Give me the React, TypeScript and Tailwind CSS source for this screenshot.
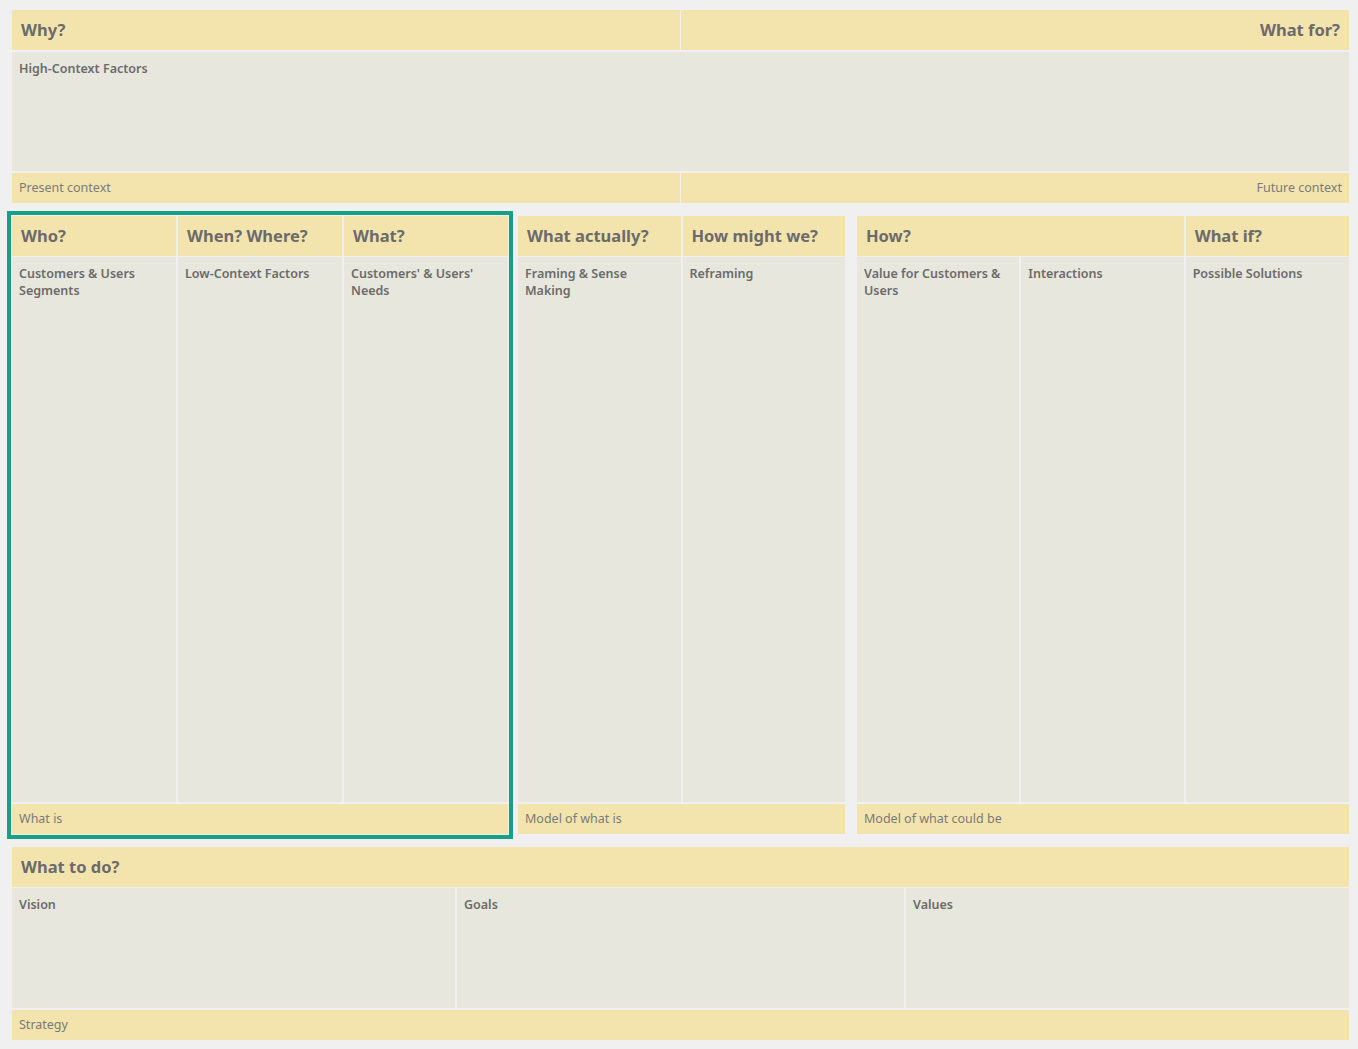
import React from 'react';

const font = { fontFamily: '"Noto Sans", "Open Sans", sans-serif' };

const Head = ({ children, right }: { children?: React.ReactNode; right?: boolean }) => (
  <div className={`h-[40px] bg-[#f3e4ae] flex items-center px-[9px] text-[16.5px] font-bold text-[#6b6b6b] ${right ? 'justify-end' : ''}`}>
    {children}
  </div>
);

const Foot = ({ children, right }: { children?: React.ReactNode; right?: boolean }) => (
  <div className={`h-[30px] bg-[#f3e4ae] flex items-center px-[7px] text-[12.5px] text-[#7a7a7a] ${right ? 'justify-end' : ''}`}>
    {children}
  </div>
);

const Col = ({ title, label }: { title?: string; label: string }) => (
  <div className="flex-1 flex flex-col gap-px min-w-0">
    {title !== undefined && <Head>{title}</Head>}
    <div className="flex-1 bg-[#e8e7dd] px-[7px] pt-[8px] text-[12.5px] font-semibold leading-[17px] text-[#6b6b6b]">{label}</div>
  </div>
);

export default function App() {
  return (
    <div style={font} className="w-[1358px] h-[1049px] bg-[#f0f0f0] pl-[12px] pr-[9px] pt-[10px] flex flex-col gap-[13px]">
      {/* top */}
      <div className="h-[193px] flex flex-col gap-[2px]">
        <div className="flex gap-px">
          <div className="flex-1"><Head>Why?</Head></div>
          <div className="flex-1"><Head right>What for?</Head></div>
        </div>
        <div className="flex-1 bg-[#e8e7dd] px-[7px] pt-[8px] text-[12.5px] font-semibold text-[#6b6b6b]">High-Context Factors</div>
        <div className="flex gap-px">
          <div className="flex-1"><Foot>Present context</Foot></div>
          <div className="flex-1"><Foot right>Future context</Foot></div>
        </div>
      </div>

      {/* middle */}
      <div className="h-[618px] flex">
        <div className="w-[496px] flex flex-col gap-[2px] outline-[4px] outline-solid outline-[#17a084] outline-offset-[1px]">
          <div className="flex-1 flex gap-[2px]">
            <Col title="Who?" label="Customers & Users Segments" />
            <Col title="When? Where?" label="Low-Context Factors" />
            <Col title="What?" label="Customers' & Users' Needs" />
          </div>
          <Foot>What is</Foot>
        </div>
        <div className="w-[327px] ml-[10px] flex flex-col gap-[2px]">
          <div className="flex-1 flex gap-[2px]">
            <Col title="What actually?" label="Framing & Sense Making" />
            <Col title="How might we?" label="Reframing" />
          </div>
          <Foot>Model of what is</Foot>
        </div>
        <div className="flex-1 ml-[12px] flex flex-col gap-[2px]">
          <div className="flex-1 flex gap-[2px]">
            <div className="flex-[2] flex flex-col gap-px">
              <Head>How?</Head>
              <div className="flex-1 flex gap-[2px]">
                <Col label="Value for Customers & Users" />
                <Col label="Interactions" />
              </div>
            </div>
            <Col title="What if?" label="Possible Solutions" />
          </div>
          <Foot>Model of what could be</Foot>
        </div>
      </div>

      {/* bottom */}
      <div className="h-[193px] flex flex-col gap-[1px]">
        <Head>What to do?</Head>
        <div className="flex-1 flex gap-[2px] mb-[1px]">
          <div className="w-[443px] flex"><Col label="Vision" /></div>
          <div className="w-[447px] flex"><Col label="Goals" /></div>
          <div className="flex-1 flex"><Col label="Values" /></div>
        </div>
        <Foot>Strategy</Foot>
      </div>
    </div>
  );
}
